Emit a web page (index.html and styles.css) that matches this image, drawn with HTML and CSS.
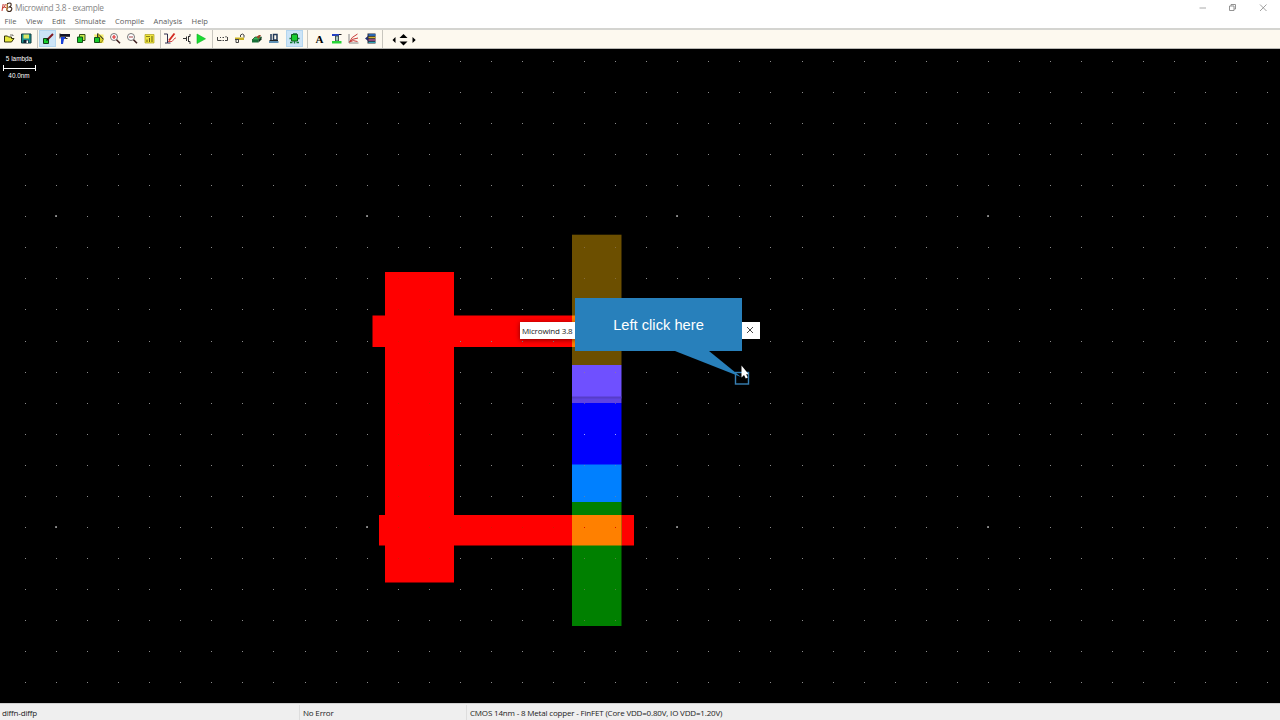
FILE: index.html
```html
<!DOCTYPE html>
<html lang="en">
<head>
  <meta charset="UTF-8">
  <meta name="viewport" content="width=device-width, initial-scale=1.0">
  <title>Microwind 3.8 - example</title>
  <link rel="stylesheet" href="styles.css">
</head>
<body>
  <header class="titlebar">
    <svg class="logo" width="12" height="12" viewBox="0 0 12 12" fill="none">
      <path d="M1 10L2.2 3M1.8 6.5Q3.5 7.5 4.3 3M4 6.5H5.5" stroke="#c8423a" stroke-width="1.1"/>
      <path d="M6.5 2.5Q11 1 10 4.5Q9.5 6 8 6Q11.5 6 10.7 8.5Q9.7 11.5 6.5 10Q4.8 8.5 7 6.5Q5.5 4 6.5 2.5Z" stroke="#3b2418" stroke-width="1.1"/>
      <path d="M6 3V9.5" stroke="#e49a35"/>
    </svg>
    <span class="title">Microwind 3.8 - example</span>
    <div class="window-controls">
      <svg width="30" height="14" viewBox="0 0 30 14"><path d="M11.5 7h6.500" stroke="#aaa"/></svg>
      <svg width="30" height="14" viewBox="0 0 30 14" fill="none" stroke="#888" stroke-width=".9"><path d="M11.500 5h4.500v4.500h-4.500zM13 4.800V3.500h4.500V8h-1.300"/></svg>
      <svg width="30" height="14" viewBox="0 0 30 14"><path d="M12 3.500l6.500 6.500M18.500 3.500L12 10" stroke="#888" stroke-width=".8"/></svg>
    </div>
  </header>

  <nav class="menubar">
    <span>File</span>
    <span>View</span>
    <span>Edit</span>
    <span>Simulate</span>
    <span>Compile</span>
    <span>Analysis</span>
    <span>Help</span>
  </nav>

  <div class="toolbar">
    <div class="group">
      <!-- open, save -->
      <svg class="tool" viewBox="0 0 17 17"><path d="M3.500 12V6h3l1 1h3v1.500H13L10.500 12z" fill="#e8e83c" stroke="#33330a"/><path d="M9 5h3v1" stroke="#333" fill="none" stroke-width=".7"/></svg>
      <svg class="tool" viewBox="0 0 17 17"><path d="M3.500 4h9.500v9H3.500z" fill="#189090" stroke="#143c40"/><path d="M5.500 4.500h5.500v4H5.500z" fill="#d8e868"/><path d="M5.500 10h5v3h-5z" fill="#123"/><path d="M8.500 10.500H10V13H8.500z" fill="#fff"/></svg>
    </div>
    <div class="group">
      <!-- box, ruler, copy, move, zoom in, zoom out, palette -->
      <svg class="tool active" viewBox="0 0 17 17"><path d="M4.500 8.500h5v5h-5z" fill="#18d030" stroke="#143d18"/><path d="M9 9L14 4" stroke="#801820" stroke-width="2"/><path d="M7.500 10.500l2-2" stroke="#111" stroke-width="1.300"/></svg>
      <svg class="tool" viewBox="0 0 17 17"><path d="M4 4h10v2.800H4z" fill="#141424"/><path d="M5 7h4v2H8l-1 5H5z" fill="#1840d8"/><path d="M4 3.500v5M9.500 7v1.500h2" stroke="#222" fill="none"/></svg>
      <svg class="tool" viewBox="0 0 17 17"><path d="M6.500 4.500h5.500v6H6.500z" fill="#c9e94b" stroke="#375017"/><path d="M4.500 7h5v5.500h-5z" fill="#18c92a" stroke="#145016"/></svg>
      <svg class="tool" viewBox="0 0 17 17"><path d="M4 4.500h9.500v8.500H7z" fill="#f5ee70"/><path d="M8 3.500l5.500 5.500-2 3.500H8z" fill="#d8d02d" stroke="#777008" stroke-width=".8"/><path d="M4.500 7.500h5v5h-5z" fill="#18c92a" stroke="#145016"/><path d="M7.500 3.500v4M10 5.500l3 3.500" stroke="#333"/></svg>
      <svg class="tool" viewBox="0 0 17 17" fill="none"><circle cx="7" cy="7" r="3.500" stroke="#777" fill="#fff"/><path d="M5 7h4M7 5v4" stroke="#e03030" stroke-width="1.200"/><path d="M9.500 9.800l3.500 3.500" stroke="#402020" stroke-width="1.600"/></svg>
      <svg class="tool" viewBox="0 0 17 17" fill="none"><circle cx="7" cy="7" r="3.500" stroke="#777" fill="#fff"/><path d="M5 7h4" stroke="#a04040"/><path d="M9.500 9.800l3.500 3.500" stroke="#402020" stroke-width="1.600"/></svg>
      <svg class="tool" viewBox="0 0 17 17"><path d="M4 4.500h9V13H4z" fill="#f0e53c" stroke="#aaa020" stroke-width=".7"/><path d="M6 9.500V12M8.500 8v4M11 6v6" stroke="#655f12"/><path d="M5 6.500h4" stroke="#8a8218"/></svg>
    </div>
    <div class="group">
      <!-- 2d cross-section, mos generator, run -->
      <svg class="tool" viewBox="0 0 17 17" fill="none"><path d="M2 4h3.500v9H3M5.500 13h3" stroke="#303050"/><path d="M7 10.500L12.500 3.500" stroke="#d22a22" stroke-width="1.900"/><path d="M6 11.500h4l3-3.500h1" stroke="#d04040" stroke-width=".9"/></svg>
      <svg class="tool" viewBox="0 0 17 17" fill="none" stroke="#333"><path d="M4 8.500h3M7.500 6.500v4.500M9.500 6v6M9.500 6.500H11V4M9.500 11.500H11V14"/></svg>
      <svg class="tool run" viewBox="0 0 17 17"><path d="M4 4v9.500l8.500-4.700z" fill="#18dc30" stroke="#13b024" stroke-width=".6"/></svg>
    </div>
    <div class="group">
      <!-- distance, process views, 3d, text on top -->
      <svg class="tool" viewBox="0 0 17 17" fill="none" stroke="#444"><path d="M3.500 7v3.500H6"/><path d="M6 10.500h6" stroke-dasharray="1.500 1"/><path d="M13.500 7v3.500H12M6 7.500h1M8.500 7.500h1.500M12 6v1.500"/></svg>
      <svg class="tool" viewBox="0 0 17 17"><path d="M4 7.500h9v2.500H4z" fill="#c8b020"/><path d="M9.500 7V5q2-2 3.500 0v2.500M5 10v2.500h2.500V10M4 9.500h4" fill="none" stroke="#444"/></svg>
      <svg class="tool" viewBox="0 0 17 17"><path d="M4 10l3-3h6.500l-3 3z" fill="#30b858" stroke="#184020" stroke-width=".7"/><path d="M4 10h6.500v2.500H4z" fill="#187038"/><path d="M10.500 10l3-3v2.500l-3 3z" fill="#0b3018"/><path d="M8.500 7L11 5h2l-2.500 4z" fill="#a04828"/></svg>
      <svg class="tool" viewBox="0 0 17 17"><path d="M6 4v6M8.500 4.500H12V10H8.500z" fill="none" stroke="#203858" stroke-width="1.500"/><path d="M4 12h9.500" stroke="#3878a8" stroke-width="1.600"/><path d="M4.500 10.500h8.500" stroke="#222"/></svg>
      <svg class="tool active spaced" viewBox="0 0 17 17"><path d="M5.500 4.500h6V11h-6z" fill="#18cc30" stroke="#125a18"/><path d="M7 4h4M3.500 8.500h2M11.500 8.500h2M4 12.500h2.500M8.500 11v2.500M10.500 12.500H13" stroke="#173" stroke-width="1.400"/></svg>
    </div>
    <div class="group edit-tools">
      <!-- text, vias, curves, layers -->
      <span class="tool letter">A</span>
      <svg class="tool" viewBox="0 0 17 17"><path d="M4 4h7v2H4z" fill="#2340c5"/><path d="M7.500 6h3v5h-3z" fill="#a7c8c0" stroke="#455"/><path d="M4 11h9.500v2.500H4z" fill="#28d436"/><path d="M11 4.500h2.500" stroke="#222"/></svg>
      <svg class="tool" viewBox="0 0 17 17" fill="none"><path d="M4 4v9h9.500" stroke="#888"/><path d="M4.500 12Q6 7 12.500 4M4.500 12Q7 8.500 13 8M4.500 12Q8 9.500 12.500 11.500" stroke="#c83a38"/></svg>
      <svg class="tool" viewBox="0 0 17 17"><path d="M5.500 3.500h8v10h-8z" fill="#282838"/><path d="M6.500 5h7" stroke="#2878d8" stroke-width="1.500"/><path d="M6.500 7.500h7" stroke="#d3b532" stroke-width="1.500"/><path d="M6.500 10h7" stroke="#c85aa8" stroke-width="1.300"/><path d="M6.500 12.300h7" stroke="#36c2d8"/><path d="M3 8.500l3-2.500v5z" fill="#202d70"/></svg>
    </div>
    <div class="group arrows">
      <svg viewBox="0 0 33 17" width="33" height="17"><path d="M7.500 6v6L4.500 9zM11.500 7l4-4 4 4zM11.500 10.500h8l-4 4zM24.500 6v6l3.200-3z" fill="#000"/></svg>
    </div>
  </div>

  <main class="workspace">
    <svg class="layout" width="1280" height="654" viewBox="0 49 1280 654">
      <!-- polysilicon -->
      <g fill="#ff0000">
        <rect x="372.500" y="315.500" width="202.500" height="31.500"/>
        <rect x="379" y="515" width="255" height="30.500"/>
        <rect x="385" y="272" width="69" height="310.500"/>
      </g>
      <!-- diffusion and metal column -->
      <rect x="572" y="234.700" width="49.500" height="130.300" fill="#6c4f00"/>
      <rect x="572" y="315.500" width="49.500" height="31.500" fill="#ff7f00"/>
      <rect x="572" y="365" width="49.500" height="32" fill="#6f50ff"/>
      <rect x="572" y="397" width="49.500" height="6" fill="#5f43e2"/>
      <rect x="572" y="396.500" width="49.500" height="2" fill="#563cc8"/>
      <rect x="572" y="403" width="49.500" height="62" fill="#0000ff"/>
      <rect x="572" y="464.500" width="49.500" height="37.500" fill="#0080ff"/>
      <rect x="572" y="502" width="49.500" height="124" fill="#008000"/>
      <rect x="572" y="515" width="49.500" height="30.500" fill="#ff8000"/>
      <g id="grid"></g>
    </svg>

    <div class="scale">
      <span>5 lambda</span>
      <div class="scale-bar"></div>
      <span>40.0nm</span>
    </div>

    <div class="dialog">
      <span>Microwind 3.8</span>
      <svg width="8" height="8" viewBox="0 0 8 8"><path d="M1 1l6 6M7 1L1 7" stroke="#333" stroke-width=".9"/></svg>
    </div>

    <div class="callout">Left click here</div>
    <svg class="pointer" width="80" height="40" viewBox="674 350 80 40">
      <rect x="735.500" y="372.500" width="13" height="11.500" fill="none" stroke="#3880b4" stroke-width="1.400"/>
      <path d="M675 351H709L741 377z" fill="#2880bb"/>
      <path d="M741.500 365.500v12l2.500-2.500 1.800 3.400 2-.9-1.700-3.300h2.500z" fill="#fff"/>
    </svg>
  </main>

  <footer class="statusbar">
    <span class="layer-name">diffn-diffp</span>
    <span class="message">No Error</span>
    <span class="process">CMOS 14nm - 8 Metal copper - FinFET (Core VDD=0.80V, IO VDD=1.20V)</span>
  </footer>

  <script src="script.js"></script>
</body>
</html>
```

FILE: styles.css
```css
body {
  margin: 0;
  width: 1280px;
  height: 720px;
  overflow: hidden;
  display: flex;
  flex-direction: column;
  background-color: #ffffff;
  font-family: "Open Sans", "Noto Sans", sans-serif;
  font-size: 7.6px;
  color: #5c5c5c;
}
.titlebar {
  height: 15px;
  display: flex;
  align-items: center;
}
.logo {
  margin-left: 1px;
  margin-bottom: 2px;
}
.title {
  margin-left: 2px;
  font-size: 8.3px;
  letter-spacing: -0.25px;
  color: #858585;
}
.window-controls {
  display: flex;
  margin-left: auto;
  margin-right: 2px;
}
.menubar {
  height: 13px;
  display: flex;
  align-items: center;
  gap: 9.4px;
  padding-left: 4.5px;
}
.menubar span {
  position: relative;
  top: -0.5px;
}
.toolbar {
  box-sizing: border-box;
  height: 21px;
  display: flex;
  align-items: center;
  background-color: #fdf9ef;
  border-top: 2px solid #d4d4d0;
  border-bottom: 1px solid #b8b8b4;
}
.group {
  display: flex;
  align-items: center;
  height: 18px;
  padding: 0 1px;
}
.group + .group {
  border-left: 1px solid #c8c6be;
  margin-left: 1px;
}
.tool {
  width: 17px;
  height: 17px;
  flex: none;
  margin-bottom: 1px;
}
.tool.active {
  background-color: #cce4f7;
  box-shadow: inset 0 0 0 1px #b4d6ef;
}
.tool.run {
  margin-left: -3px;
}
.tool.spaced {
  margin-left: 4px;
  margin-right: 2px;
}
.letter {
  font: bold 11px/18px "Liberation Serif", serif;
  color: #000000;
  text-align: center;
}
.group.edit-tools {
  padding-left: 3px;
  padding-right: 2px;
}
.group.arrows {
  padding-left: 5px;
}
.workspace {
  position: relative;
  height: 654px;
  background-color: #000000;
}
.layout {
  display: block;
}
.scale {
  position: absolute;
  left: 3px;
  top: 6px;
  width: 32px;
  display: flex;
  flex-direction: column;
  align-items: center;
  font: 6.4px/8px "Liberation Sans", sans-serif;
  color: #ffffff;
  white-space: nowrap;
}
.scale-bar {
  box-sizing: border-box;
  width: 33px;
  height: 6px;
  margin: 2px 0 1px;
  border: solid #ffffff;
  border-width: 0 1px;
  background: linear-gradient(#ffffff, #ffffff) center / 100% 1px no-repeat;
}
.dialog {
  position: absolute;
  left: 520px;
  top: 273px;
  box-sizing: border-box;
  width: 240px;
  height: 17px;
  padding: 0 6px 1px 2px;
  display: flex;
  align-items: center;
  justify-content: space-between;
  background-color: #ffffff;
  box-shadow: 0 1px 5px rgba(0, 0, 0, 0.5);
  font-size: 8px;
  letter-spacing: -0.15px;
  color: #222222;
}
.callout {
  position: absolute;
  left: 575px;
  top: 249px;
  width: 167px;
  height: 53px;
  background-color: #2880bb;
  color: #ffffff;
  font: 14.7px/54px "Liberation Sans", sans-serif;
  text-align: center;
}
.pointer {
  position: absolute;
  left: 674px;
  top: 301px;
}
.statusbar {
  box-sizing: border-box;
  height: 17px;
  display: flex;
  align-items: center;
  background-color: #efefef;
  border-top: 1px solid #d0d0d0;
  font-size: 8px;
  letter-spacing: -0.18px;
  color: #222222;
}
.statusbar span {
  box-sizing: border-box;
  padding-left: 3px;
  line-height: 15px;
}
.statusbar .layer-name {
  width: 299px;
  padding-left: 2px;
}
.message {
  width: 167px;
  border-left: 1px solid #dddddd;
}
.process {
  border-left: 1px solid #dddddd;
}
```

FILE: script.js
```javascript
// Lambda grid: one dot every 5 lambda, a brighter one every 50
const grid = document.getElementById('grid');
const step = 31.06;

for (let row = 0; row < 21; row++) {
  for (let col = 0; col < 41; col++) {
    const x = Math.round(25 + col * step);
    const y = Math.round(61 + row * step);
    const major = col % 10 === 1 && row % 10 === 5;
    const onRed = x > 384 && x < 454 && y > 271 && y < 582 || y > 514 && y < 545 && x > 379 && x < 634;
    const onColumn = x >= 572 && x < 622 && y > 235 && y < 626;
    let color = '#8c8c8c';
    if (major) color = '#e0e0e0';
    if (onColumn) color = y > 403 && y < 465 ? '#a0a0ff' : 'rgba(160, 140, 120, 0.5)';
    if (onRed) color = '#d81800';

    const dot = document.createElementNS('http://www.w3.org/2000/svg', 'rect');
    dot.setAttribute('x', major ? x - 0.7 : x);
    dot.setAttribute('y', major ? y - 0.7 : y);
    dot.setAttribute('width', major ? 1.5 : 1);
    dot.setAttribute('height', major ? 1.5 : 1);
    dot.setAttribute('fill', color);
    grid.appendChild(dot);
  }
}
```
